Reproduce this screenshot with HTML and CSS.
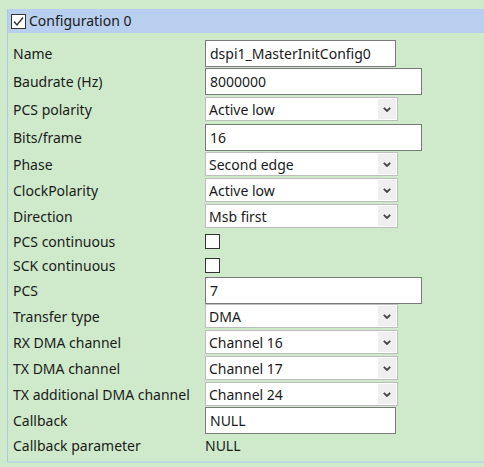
FILE: index.html
```html
<!DOCTYPE html>
<html lang="en">
<head>
    <meta charset="UTF-8">
    <meta name="viewport" content="width=device-width, initial-scale=1.0">
    <title>DSPI Configuration</title>
    <link rel="stylesheet" href="styles.css">
</head>
<body>
    <div class="config-panel">
        <div class="config-header">
            <span class="checkbox checked">
                <svg width="13" height="13" viewBox="0 0 13 13"><path d="M2 6.5 L5 10 L11 2.5" fill="none" stroke="#333" stroke-width="1.4"/></svg>
            </span>
            <span class="config-title">Configuration 0</span>
        </div>

        <div class="config-body">
            <div class="field-row tall">
                <label class="field-label">Name</label>
                <input class="text-input medium" type="text" value="dspi1_MasterInitConfig0">
            </div>
            <div class="field-row tall">
                <label class="field-label">Baudrate (Hz)</label>
                <input class="text-input wide" type="text" value="8000000">
            </div>
            <div class="field-row tall">
                <label class="field-label">PCS polarity</label>
                <div class="select-box">
                    <select><option>Active low</option><option>Active high</option></select>
                    <span class="select-arrow"><svg width="8" height="5" viewBox="0 0 8 5"><path d="M0.8 0.8 L4 4 L7.2 0.8" fill="none" stroke="#444" stroke-width="1.8"/></svg></span>
                </div>
            </div>
            <div class="field-row tall">
                <label class="field-label">Bits/frame</label>
                <input class="text-input wide" type="text" value="16">
            </div>
            <div class="field-row">
                <label class="field-label">Phase</label>
                <div class="select-box">
                    <select><option>Second edge</option><option>First edge</option></select>
                    <span class="select-arrow"><svg width="8" height="5" viewBox="0 0 8 5"><path d="M0.8 0.8 L4 4 L7.2 0.8" fill="none" stroke="#444" stroke-width="1.8"/></svg></span>
                </div>
            </div>
            <div class="field-row">
                <label class="field-label">ClockPolarity</label>
                <div class="select-box">
                    <select><option>Active low</option><option>Active high</option></select>
                    <span class="select-arrow"><svg width="8" height="5" viewBox="0 0 8 5"><path d="M0.8 0.8 L4 4 L7.2 0.8" fill="none" stroke="#444" stroke-width="1.8"/></svg></span>
                </div>
            </div>
            <div class="field-row">
                <label class="field-label">Direction</label>
                <div class="select-box">
                    <select><option>Msb first</option><option>Lsb first</option></select>
                    <span class="select-arrow"><svg width="8" height="5" viewBox="0 0 8 5"><path d="M0.8 0.8 L4 4 L7.2 0.8" fill="none" stroke="#444" stroke-width="1.8"/></svg></span>
                </div>
            </div>
            <div class="field-row short">
                <label class="field-label">PCS continuous</label>
                <span class="checkbox"></span>
            </div>
            <div class="field-row short">
                <label class="field-label">SCK continuous</label>
                <span class="checkbox"></span>
            </div>
            <div class="field-row">
                <label class="field-label">PCS</label>
                <input class="text-input wide" type="text" value="7">
            </div>
            <div class="field-row">
                <label class="field-label">Transfer type</label>
                <div class="select-box">
                    <select><option>DMA</option><option>Interrupt</option></select>
                    <span class="select-arrow"><svg width="8" height="5" viewBox="0 0 8 5"><path d="M0.8 0.8 L4 4 L7.2 0.8" fill="none" stroke="#444" stroke-width="1.8"/></svg></span>
                </div>
            </div>
            <div class="field-row">
                <label class="field-label">RX DMA channel</label>
                <div class="select-box">
                    <select><option>Channel 16</option></select>
                    <span class="select-arrow"><svg width="8" height="5" viewBox="0 0 8 5"><path d="M0.8 0.8 L4 4 L7.2 0.8" fill="none" stroke="#444" stroke-width="1.8"/></svg></span>
                </div>
            </div>
            <div class="field-row">
                <label class="field-label">TX DMA channel</label>
                <div class="select-box">
                    <select><option>Channel 17</option></select>
                    <span class="select-arrow"><svg width="8" height="5" viewBox="0 0 8 5"><path d="M0.8 0.8 L4 4 L7.2 0.8" fill="none" stroke="#444" stroke-width="1.8"/></svg></span>
                </div>
            </div>
            <div class="field-row">
                <label class="field-label">TX additional DMA channel</label>
                <div class="select-box">
                    <select><option>Channel 24</option></select>
                    <span class="select-arrow"><svg width="8" height="5" viewBox="0 0 8 5"><path d="M0.8 0.8 L4 4 L7.2 0.8" fill="none" stroke="#444" stroke-width="1.8"/></svg></span>
                </div>
            </div>
            <div class="field-row">
                <label class="field-label">Callback</label>
                <input class="text-input medium" type="text" value="NULL">
            </div>
            <div class="field-row short">
                <label class="field-label">Callback parameter</label>
                <span class="field-value">NULL</span>
            </div>
        </div>
    </div>
</body>
</html>
```

FILE: styles.css
```css
:root {
    --panel-green: #cfeacb;
    --header-blue: #b9cfef;
    --panel-border: #aec9e4;
    --bottom-line: #bcd9df;
    --text: #1a1a1a;
    --input-border: #7a7a7a;
    --select-border: #bdbdbd;
}

* {
    margin: 0;
    padding: 0;
    box-sizing: border-box;
    font-family: 'Noto Sans', 'Liberation Sans', Arial, sans-serif;
}

body {
    background-color: var(--panel-green);
    color: var(--text);
    font-size: 14px;
    width: 484px;
    height: 467px;
    overflow: hidden;
}

.config-panel {
    margin: 9px 0 0 7px;
    border-left: 1px solid var(--panel-border);
    border-bottom: 2px solid var(--bottom-line);
    padding-bottom: 4px;
}

.config-header {
    height: 24px;
    background-color: var(--header-blue);
    display: flex;
    align-items: center;
    padding-left: 3px;
    gap: 3px;
}

.config-title {
    font-size: 14px;
    line-height: 24px;
}

.checkbox {
    width: 15px;
    height: 15px;
    background-color: white;
    border: 1px solid #333;
    display: inline-flex;
    align-items: center;
    justify-content: center;
}

.config-body {
    padding-top: 6px;
}

.field-row {
    height: 26px;
    display: flex;
    align-items: center;
}

.field-row.tall {
    height: 28px;
}

.field-row.short {
    height: 24px;
}

.field-label {
    width: 197px;
    flex-shrink: 0;
    padding-left: 5px;
    font-size: 14px;
    white-space: nowrap;
}

.text-input {
    height: 27px;
    border: 1px solid var(--input-border);
    background-color: white;
    padding: 0 4px;
    font-size: 14px;
    color: var(--text);
    outline: none;
}

.text-input.medium {
    width: 191px;
}

.text-input.wide {
    width: 217px;
}

.select-box {
    position: relative;
    width: 193px;
    height: 24px;
}

.select-box select {
    appearance: none;
    -webkit-appearance: none;
    width: 100%;
    height: 100%;
    border: 1px solid var(--select-border);
    border-radius: 0;
    background-color: white;
    padding: 0 3px;
    font-size: 14px;
    color: var(--text);
    outline: none;
}

.select-arrow {
    position: absolute;
    top: 2px;
    right: 2px;
    width: 18px;
    height: 20px;
    background-color: #efefef;
    display: flex;
    align-items: center;
    justify-content: center;
    pointer-events: none;
}

.field-value {
    font-size: 14px;
}
```
